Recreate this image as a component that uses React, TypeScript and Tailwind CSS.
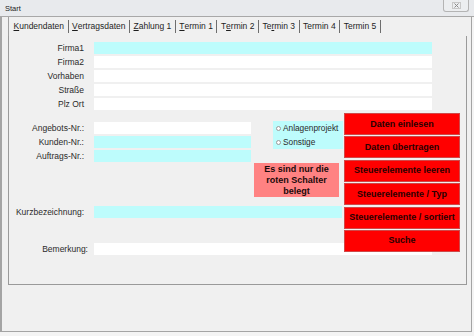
import React from "react";

const Row = ({ label, fieldW, cyan, labelW = 75, gap = 10 }: { label: string; fieldW: number; cyan?: boolean; labelW?: number; gap?: number }) => (
  <div className="flex items-center h-[14px]">
    <div className="text-right text-[8.5px] leading-none text-[#2a2a2a] shrink-0" style={{ width: labelW }}>{label}</div>
    <div className={`h-[12px] shrink-0 ${cyan ? "bg-[#bdfcfc]" : "bg-white"}`} style={{ width: fieldW, marginLeft: gap }} />
  </div>
);

const tabs: { pre: string; u: string; post: string }[] = [
  { pre: "", u: "K", post: "undendaten" },
  { pre: "", u: "V", post: "ertragsdaten" },
  { pre: "", u: "Z", post: "ahlung 1" },
  { pre: "", u: "T", post: "ermin 1" },
  { pre: "T", u: "e", post: "rmin 2" },
  { pre: "Te", u: "r", post: "min 3" },
  { pre: "Termin 4", u: "", post: "" },
  { pre: "Termin 5", u: "", post: "" },
];

const buttons = ["Daten einlesen", "Daten übertragen", "Steuerelemente leeren", "Steuerelemente / Typ", "Steuerelemente / sortiert", "Suche"];

export default function App() {
  return (
    <div className="w-[474px] h-[336px] bg-[#f4f4f4] overflow-hidden font-['Liberation_Sans',Arial,sans-serif]">
      <div className="h-[17px] flex items-start justify-between bg-[#e8eaed] border-b border-[#a8a8a8]">
        <span className="text-[7.5px] leading-none text-[#222] pl-[5px] pt-[5px]">Start</span>
        <div className="mr-[5px] w-[26px] h-[12px] border border-t-0 border-[#b4b4b4] rounded-b-[3px] bg-[#eceef0] flex items-center justify-center">
          <svg width="9" height="7" viewBox="0 0 9 7">
            <rect x="0.5" y="0.5" width="8" height="6" fill="none" stroke="#c8c8c8" strokeWidth="1" />
            <path d="M2.5 1.5 L6.5 5.5 M6.5 1.5 L2.5 5.5" stroke="#8a8a8a" strokeWidth="1" />
          </svg>
        </div>
      </div>
      <div className="h-[315px] w-[472px] border-l-2 border-r border-b border-[#a4a4a4] bg-[#f0f0f0]">
        <div className="ml-[6px] w-[459px] h-[268px] flex flex-col">
          <div className="h-[19px] border-l border-[#a0a0a0] flex items-center pl-[1px]">
            {tabs.map((t, i) => (
              <div key={i} className="flex items-center h-[13px] pl-[3.5px] pr-[3.5px] border-r border-[#6e6e6e] text-[8.5px] leading-none text-[#1e1e1e] whitespace-nowrap">
                {t.pre}
                {t.u && <span className="underline underline-offset-[1px]">{t.u}</span>}
                {t.post}
              </div>
            ))}
          </div>
          <div className="relative flex-1 border-l border-r border-b border-[#9a9a9a] pt-[5px]">
            <Row label="Firma1" fieldW={338} cyan />
            <Row label="Firma2" fieldW={338} />
            <Row label="Vorhaben" fieldW={338} />
            <Row label="Straße" fieldW={338} />
            <Row label="Plz Ort" fieldW={338} />

            <div className="flex mt-[10px]">
              <div className="flex flex-col">
                <Row label="Angebots-Nr.:" fieldW={157} />
                <Row label="Kunden-Nr.:" fieldW={157} cyan />
                <Row label="Auftrags-Nr.:" fieldW={157} cyan />
              </div>
              <div className="ml-[22px] w-[70px] h-[28px] bg-[#bdfcfc] flex flex-col pl-[3px]">
                {["Anlagenprojekt", "Sonstige"].map((r) => (
                  <div key={r} className="h-[14px] flex items-center gap-[2px]">
                    <span className="w-[5px] h-[5px] rounded-full border border-[#9a9a9a] bg-white shrink-0" />
                    <span className="text-[8.3px] leading-none text-[#2a2a2a] whitespace-nowrap">{r}</span>
                  </div>
                ))}
              </div>
            </div>

            <div className="ml-[245px] w-[85px] h-[34px] bg-[#ff8282] flex flex-col items-center justify-center text-[9px] leading-[11px] font-bold text-[#1a0a0a] text-center">
              <span>Es sind nur die</span>
              <span>roten Schalter</span>
              <span>belegt</span>
            </div>

            <div className="mt-[8px]">
              <Row label="Kurzbezeichnung:" fieldW={248} cyan />
            </div>
            <div className="mt-[23px]">
              <Row label="Bemerkung:" fieldW={338} labelW={79} gap={6} />
            </div>

            <div className="absolute left-[335px] top-[77px] w-[116px] flex flex-col gap-[1.4px]">
              {buttons.map((b) => (
                <div key={b} className="h-[22px] bg-[#ff0000] border border-[#d04848] flex items-center justify-center text-[9px] font-bold leading-none text-[#2a0000] whitespace-nowrap">
                  {b}
                </div>
              ))}
            </div>
          </div>
        </div>
      </div>
    </div>
  );
}
